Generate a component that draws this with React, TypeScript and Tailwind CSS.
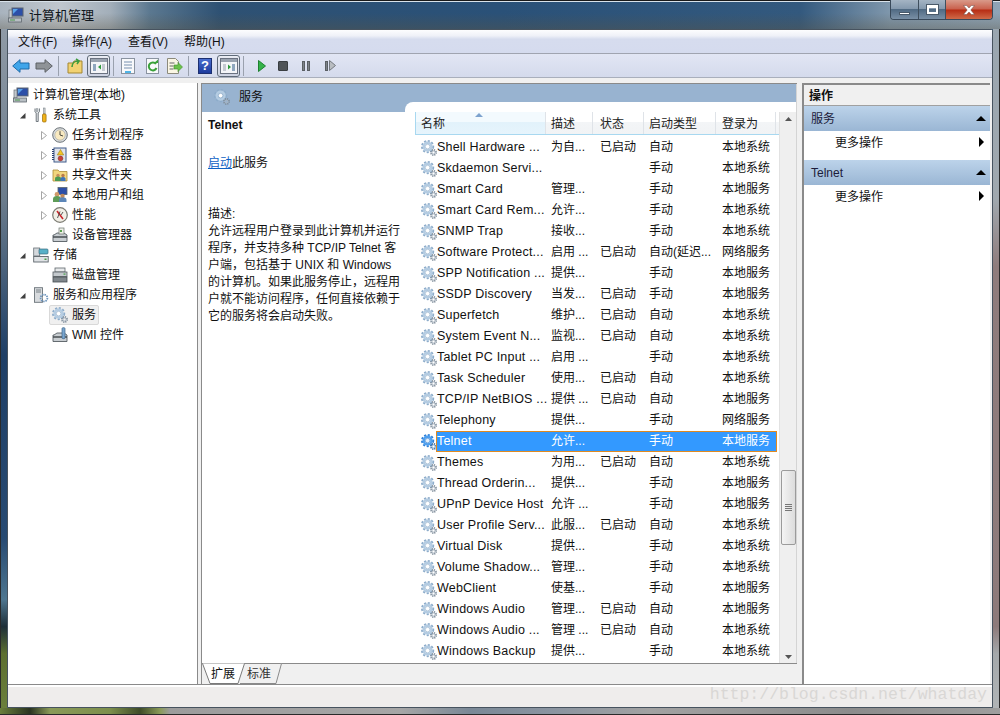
import React from 'react'

const font = { fontFamily: '"Liberation Sans", "Noto Sans CJK SC", sans-serif' }

const Gear = ({ size = 16, dark = false }: { size?: number; dark?: boolean }) => (
    <svg width={size} height={size} viewBox="0 0 16 16" className="shrink-0">
        <circle cx="6.6" cy="6.6" r="5.6" fill="none" stroke={dark ? '#2f80d8' : '#8dacca'} strokeWidth="2" strokeDasharray="2.1 1.6" />
        <circle cx="6.6" cy="6.6" r="3.9" fill="none" stroke={dark ? '#4f9fee' : '#b4cce2'} strokeWidth="2.4" />
        <circle cx="6.6" cy="6.6" r="2.3" fill={dark ? '#e4f0fc' : '#fff'} stroke={dark ? '#2a74c6' : '#86a6c4'} strokeWidth="0.6" />
        <circle cx="12.5" cy="12.5" r="2.6" fill="none" stroke={dark ? '#3f6c9c' : '#7f8d9b'} strokeWidth="1.7" strokeDasharray="1.2 0.85" />
        <circle cx="12.5" cy="12.5" r="1.5" fill="none" stroke={dark ? '#86aed6' : '#a8b4c0'} strokeWidth="1" />
    </svg>
)

const Computer = () => (
    <svg width="16" height="16" viewBox="0 0 16 16" className="shrink-0">
        <rect x="4" y="1" width="11" height="8" fill="#2c4fa8" stroke="#5a6470" strokeWidth="1" />
        <path d="M5 2h5L5 7z" fill="#59a3ea" />
        <rect x="1" y="3" width="3" height="8" fill="#c3c8cc" stroke="#6a7278" strokeWidth="0.7" />
        <rect x="0.5" y="11" width="13" height="4" fill="#b8bfc4" stroke="#5f686e" strokeWidth="0.8" />
        <rect x="2" y="12.5" width="5" height="1" fill="#4c9a4c" />
    </svg>
)

const Tools = () => (
    <svg width="16" height="16" viewBox="0 0 16 16" className="shrink-0">
        <path d="M4 1v4M2 1.5v3.2l1.2 1.3v8.5h2V6l1.2-1.3V1.5" fill="#e8ebee" stroke="#616a70" strokeWidth="0.9" />
        <rect x="10.5" y="1" width="1.6" height="6" fill="#c9ced2" stroke="#70787e" strokeWidth="0.5" />
        <rect x="9.5" y="7" width="3.6" height="8" rx="1" fill="#f0b31a" stroke="#9a6c08" strokeWidth="0.7" />
    </svg>
)

const Clock = () => (
    <svg width="16" height="16" viewBox="0 0 16 16" className="shrink-0">
        <circle cx="8" cy="8" r="7.3" fill="#d9dcdf" stroke="#6d7478" strokeWidth="1" />
        <circle cx="8" cy="8" r="5.2" fill="#f8e9c0" stroke="#a6a8a0" strokeWidth="0.6" />
        <path d="M8 4.2V8l3 1" fill="none" stroke="#4a4a40" strokeWidth="1" />
    </svg>
)

const EventLog = () => (
    <svg width="16" height="16" viewBox="0 0 16 16" className="shrink-0">
        <rect x="2" y="1" width="12" height="14" fill="#dfe3ea" stroke="#3f5a8a" strokeWidth="1" />
        <path d="M1 2v12" stroke="#2b3f70" strokeWidth="2" strokeDasharray="1 1" />
        <path d="M8.5 2.5l3.2 5.5H5.3z" fill="#f3c625" stroke="#8a6c10" strokeWidth="0.5" />
        <circle cx="8.5" cy="11.5" r="2.4" fill="#c8403a" stroke="#7a1e1a" strokeWidth="0.5" />
    </svg>
)

const SharedFolder = () => (
    <svg width="16" height="16" viewBox="0 0 16 16" className="shrink-0">
        <path d="M1 3h5l1.4 1.5H15V14H1z" fill="#f2d67e" stroke="#a98a35" strokeWidth="0.8" />
        <circle cx="6" cy="8.5" r="1.7" fill="#c98d5c" />
        <path d="M3 14v-2.5a3 2 0 0 1 6 0V14z" fill="#4d9a52" />
        <circle cx="11" cy="8.5" r="1.7" fill="#b77a4c" />
        <path d="M8.5 14v-2.5a2.6 2 0 0 1 5 0V14z" fill="#3f74b8" />
    </svg>
)

const Users = () => (
    <svg width="16" height="16" viewBox="0 0 16 16" className="shrink-0">
        <rect x="6" y="0.5" width="9" height="7" fill="#2c4fa8" stroke="#59646e" strokeWidth="0.8" />
        <circle cx="5" cy="7.5" r="2.4" fill="#d09a6a" />
        <path d="M1 15v-3a4 3 0 0 1 8 0v3z" fill="#5e9c58" />
        <circle cx="10.5" cy="9" r="2.2" fill="#c08a5a" />
        <path d="M7 15v-2a3.5 2.6 0 0 1 7.5 0v2z" fill="#5c86b8" />
    </svg>
)

const Perf = () => (
    <svg width="16" height="16" viewBox="0 0 16 16" className="shrink-0">
        <circle cx="8" cy="8" r="7.3" fill="#f1efe6" stroke="#7a7a72" strokeWidth="1.2" />
        <path d="M5 4l6 8" stroke="#c8242a" strokeWidth="1.6" />
        <path d="M8 4.5L5.5 11M11 5l-2 3" stroke="#333" strokeWidth="0.8" fill="none" />
    </svg>
)

const DeviceBox = () => (
    <svg width="16" height="16" viewBox="0 0 16 16" className="shrink-0">
        <path d="M2 8l3-2h7l3 2v6.5H1V8z" fill="#c9ced2" stroke="#555c62" strokeWidth="0.9" />
        <path d="M1 10h14" stroke="#3e454a" strokeWidth="1.4" />
        <rect x="7" y="1" width="5" height="6" fill="#eef1e8" stroke="#6c7470" strokeWidth="0.7" />
        <rect x="8" y="3" width="2" height="2" fill="#58a04e" />
    </svg>
)

const Storage = () => (
    <svg width="16" height="16" viewBox="0 0 16 16" className="shrink-0">
        <rect x="0.7" y="1" width="6" height="8" fill="#d4d8dc" stroke="#687076" strokeWidth="0.8" />
        <rect x="6" y="2" width="9" height="5" rx="1" fill="#58b0c8" stroke="#3a6d80" strokeWidth="0.7" />
        <rect x="0.7" y="9.5" width="14.5" height="5.5" fill="#dfe2e5" stroke="#5c646a" strokeWidth="0.9" />
        <rect x="11.5" y="11.5" width="2" height="1.5" fill="#49a048" />
    </svg>
)

const Disk = () => (
    <svg width="16" height="16" viewBox="0 0 16 16" className="shrink-0">
        <rect x="3" y="1" width="10" height="4" fill="#e7e9eb" stroke="#5f666c" strokeWidth="0.8" />
        <rect x="1" y="5" width="14" height="4.5" fill="#c4c9cd" stroke="#555c62" strokeWidth="0.8" />
        <rect x="1" y="10" width="14" height="5" fill="#80878c" stroke="#454b50" strokeWidth="0.8" />
        <rect x="11.5" y="6.5" width="2" height="1.2" fill="#4aa24a" />
    </svg>
)

const ServerApps = () => (
    <svg width="16" height="16" viewBox="0 0 16 16" className="shrink-0">
        <rect x="1.5" y="0.7" width="8" height="14.6" fill="#d8dbde" stroke="#6a7278" strokeWidth="0.9" />
        <path d="M3 3h5M3 5h5" stroke="#6e767c" strokeWidth="0.9" />
        <circle cx="11" cy="11" r="3.4" fill="none" stroke="#6e95bd" strokeWidth="1.8" strokeDasharray="1.4 0.9" />
        <circle cx="11" cy="11" r="1.4" fill="#fff" />
    </svg>
)

const Wmi = () => (
    <svg width="16" height="16" viewBox="0 0 16 16" className="shrink-0">
        <path d="M2 8l3-2h7l3 2v6.5H1V8z" fill="#c9ced2" stroke="#555c62" strokeWidth="0.9" />
        <path d="M1 10h14" stroke="#3e454a" strokeWidth="1.4" />
        <rect x="10" y="0.7" width="3" height="11" rx="1" fill="#7aa6cf" stroke="#3e648a" strokeWidth="0.7" />
    </svg>
)

// tree arrows
const Open = () => (
    <svg width="7" height="7" viewBox="0 0 7 7" className="shrink-0">
        <path d="M6.5 1v5.5H1z" fill="#3f3f3f" />
    </svg>
)
const Closed = () => (
    <svg width="6" height="9" viewBox="0 0 6 9" className="shrink-0">
        <path d="M0.5 0.5l5 4-5 4z" fill="#fff" stroke="#a6a6a6" />
    </svg>
)

const TreeRow = ({ level, arrow, icon, text }: { level: number; arrow?: 'open' | 'closed'; icon: React.ReactNode; text: string }) => (
    <div className={`flex items-center h-5 ${level === 0 ? 'pl-[5px]' : level === 1 ? 'pl-[11px]' : 'pl-[33px]'}`}>
        {level > 0 && <span className="w-[13px] flex items-center justify-start shrink-0">{arrow === 'open' ? <Open /> : arrow === 'closed' ? <Closed /> : null}</span>}
        <span className={level === 0 ? '' : level === 1 ? 'ml-[1px]' : 'ml-[-2px]'}>{icon}</span>
        <span className="ml-[4px]">{text}</span>
    </div>
)

const rows: [string, string, string, string, string][] = [
    ['Shell Hardware ...', '为自...', '已启动', '自动', '本地系统'],
    ['Skdaemon Servi...', '', '', '手动', '本地系统'],
    ['Smart Card', '管理...', '', '手动', '本地服务'],
    ['Smart Card Rem...', '允许...', '', '手动', '本地系统'],
    ['SNMP Trap', '接收...', '', '手动', '本地系统'],
    ['Software Protect...', '启用 ...', '已启动', '自动(延迟...', '网络服务'],
    ['SPP Notification ...', '提供...', '', '手动', '本地服务'],
    ['SSDP Discovery', '当发...', '已启动', '手动', '本地服务'],
    ['Superfetch', '维护...', '已启动', '自动', '本地系统'],
    ['System Event N...', '监视...', '已启动', '自动', '本地系统'],
    ['Tablet PC Input ...', '启用 ...', '', '手动', '本地系统'],
    ['Task Scheduler', '使用...', '已启动', '自动', '本地系统'],
    ['TCP/IP NetBIOS ...', '提供 ...', '已启动', '自动', '本地服务'],
    ['Telephony', '提供...', '', '手动', '网络服务'],
    ['Telnet', '允许...', '', '手动', '本地服务'],
    ['Themes', '为用...', '已启动', '自动', '本地系统'],
    ['Thread Orderin...', '提供...', '', '手动', '本地服务'],
    ['UPnP Device Host', '允许 ...', '', '手动', '本地服务'],
    ['User Profile Serv...', '此服...', '已启动', '自动', '本地系统'],
    ['Virtual Disk', '提供...', '', '手动', '本地系统'],
    ['Volume Shadow...', '管理...', '', '手动', '本地系统'],
    ['WebClient', '使基...', '', '手动', '本地服务'],
    ['Windows Audio', '管理...', '已启动', '自动', '本地服务'],
    ['Windows Audio ...', '管理 ...', '已启动', '自动', '本地系统'],
    ['Windows Backup', '提供...', '', '手动', '本地系统'],
]

const HeaderCell = ({ w, text }: { w: string; text: string }) => (
    <div className={`${w} h-full flex items-center pt-[2px] border-r border-[#dfe3e8] bg-[linear-gradient(#fff_0%,#fff_45%,#f3f5f7_45%,#f1f3f5_100%)]`}>
        {text}
    </div>
)

const TbBtn = ({ children, w, active }: { children: React.ReactNode; w: string; active?: boolean }) => (
    <div className={`${w} h-[22px] flex items-center justify-center shrink-0 ${active ? 'rounded-[3px] border border-[#5f6a78] bg-[linear-gradient(#e9ebf3,#c9cfdf)] shadow-[inset_0_0_1px_#fff]' : ''}`}>
        {children}
    </div>
)

const Sep = () => <div className="w-px h-[20px] bg-[#9aa1ae] shrink-0" />

const PanelIcon = ({ right }: { right?: boolean }) => (
    <svg width="18" height="16" viewBox="0 0 18 16">
        <rect x="0.5" y="0.5" width="17" height="15" fill="#f4f5f8" stroke="#6b7280" />
        <rect x="1" y="1" width="16" height="3" fill="#9aa3b0" />
        <rect x="3" y="6" width="3" height="7" fill={right ? '#c5cad2' : '#90a7bf'} />
        <rect x="12" y="6" width="3" height="7" fill={right ? '#90a7bf' : '#c5cad2'} />
        <path d={right ? 'M8 6.5l3 2.5-3 2.5z' : 'M11 6.5L8 9l3 2.5z'} fill="#2e9a3c" />
    </svg>
)

const ActionSection = ({ title }: { title: string }) => (
    <>
        <div className="h-[25px] flex items-center pl-[7px] pr-[3px] text-[#1c1c3a] bg-[linear-gradient(#bcd3ea,#9ab6d4)]">
            <span className="flex-1">{title}</span>
            <svg width="10" height="5" viewBox="0 0 10 5" className="mr-[1px]"><path d="M0 5l5-5 5 5z" fill="#000" /></svg>
        </div>
        <div className="h-[29px] flex items-start pt-[6px] pl-[31px] pr-[6px]">
            <span className="flex-1">更多操作</span>
            <svg width="5" height="10" viewBox="0 0 5 10"><path d="M0 0l5 5-5 5z" fill="#000" /></svg>
        </div>
    </>
)

export default function App() {
    return (
        <div style={font} className="w-[1000px] h-[715px] relative overflow-hidden flex flex-col text-[12px] leading-none text-[#111] bg-[#3d5c7a]">
            {/* title bar */}
            <div className="h-[29px] flex items-start shrink-0 shadow-[inset_0_1px_0_#1a1a1a,inset_0_2px_0_#d8e2ea] bg-[linear-gradient(rgba(0,0,0,0)_45%,rgba(92,84,64,0.35)_100%),linear-gradient(90deg,#a8b3be_0%,#c0c7ce_6%,#a3afba_11%,#5b7890_15%,#2e5173_22%,#2a5178_50%,#33597e_80%,#7f97ac_89%,#8fa4b6_100%)]">
                <div className="flex items-center pl-[8px] pt-[7px] gap-[5px] text-[13px] text-[#10161c]">
                    <Computer />
                    <span>计算机管理</span>
                </div>
                <div className="ml-auto mr-[7px] flex h-[20px] rounded-b-[4px] border border-t-0 border-[#39495a] overflow-hidden">
                    <div className="w-[28px] flex items-center justify-center border-r border-[#3f4f5e] bg-[linear-gradient(#a4b4c4_0%,#8398ad_48%,#506a83_50%,#7a90a6_100%)]">
                        <div className="w-[11px] h-[3px] mt-[7px] bg-white border border-[#4a5a6a]" />
                    </div>
                    <div className="w-[27px] flex items-center justify-center border-r border-[#3f4f5e] bg-[linear-gradient(#a4b4c4_0%,#8398ad_48%,#506a83_50%,#7a90a6_100%)]">
                        <div className="w-[11px] h-[9px] border-2 border-t-[3px] border-white outline outline-[#4a5a6a]" />
                    </div>
                    <div className="w-[46px] flex items-center justify-center bg-[linear-gradient(#d99a8a_0%,#c9604c_48%,#b72c14_52%,#cf6a48_100%)]">
                        <svg width="12" height="10" viewBox="0 0 12 10"><path d="M0.5 0.5h3.2L6 3l2.3-2.5h3.2L7.8 5l3.7 4.5H8.3L6 7 3.7 9.5H0.5L4.2 5z" fill="#fff" stroke="#6a4a44" strokeWidth="0.5" /></svg>
                    </div>
                </div>
            </div>

            <div className="flex-1 min-h-0 flex">
                {/* left glass edge */}
                <div className="w-[7px] shrink-0 border-l border-[#2a2a2a] bg-[linear-gradient(#8f9aa6_0%,#6b7c8c_25%,#1f3f66_48%,#274a72_75%,#4e7690_84%,#1e2f38_88%,#5c6f30_92%,#6b7f3c_100%)]" />

                {/* window body */}
                <div className="flex-1 min-w-0 flex flex-col bg-[#f0f0f0] border border-[#47535f] rounded-t-[2px]">
                    {/* menu */}
                    <div className="h-[24px] shrink-0 flex items-center pl-[10px] text-[12px] border-b border-[#a0a4b0] bg-[linear-gradient(#fdfdfe_0%,#eff1f8_25%,#d6dcee_40%,#d5dbee_100%)]">
                        <span className="w-[54px]">文件(F)</span>
                        <span className="w-[56px]">操作(A)</span>
                        <span className="w-[56px]">查看(V)</span>
                        <span>帮助(H)</span>
                    </div>
                    {/* toolbar */}
                    <div className="h-[24px] shrink-0 flex items-center pl-[3px] border-b border-[#a9afbc] bg-[linear-gradient(#e2e6f4,#d4daec)]">
                        <TbBtn w="w-[19px]">
                            <svg width="18" height="14" viewBox="0 0 18 14"><path d="M0.7 7L8 0.7V4h9v6H8v3.3z" fill="#3fa5ea" stroke="#1d6aa8" /></svg>
                        </TbBtn>
                        <TbBtn w="w-[22px] ml-[3px]">
                            <svg width="18" height="14" viewBox="0 0 18 14"><path d="M17.3 7L10 0.7V4H1v6h9v3.3z" fill="#8f9397" stroke="#5d6165" /></svg>
                        </TbBtn>
                        <div className="w-[3px]" />
                        <Sep />
                        <TbBtn w="w-[16px] ml-[8px]">
                            <svg width="16" height="16" viewBox="0 0 16 16"><path d="M1 5h5l1-2h8v12H1z" fill="#f2d272" stroke="#a38733" /><path d="M5 9c0-4 3-6 6-6M9 1l3 2-2 3" fill="none" stroke="#3f9c3f" strokeWidth="1.6" /></svg>
                        </TbBtn>
                        <TbBtn w="w-[23px] ml-[4px]" active><PanelIcon /></TbBtn>
                        <div className="w-[3px]" />
                        <Sep />
                        <TbBtn w="w-[16px] ml-[6px]">
                            <svg width="16" height="16" viewBox="0 0 16 16"><rect x="1.5" y="0.5" width="13" height="15" fill="#f8f9fb" stroke="#8a93a0" /><path d="M4 4h8M4 7h8M4 10h8" stroke="#7690b0" /><rect x="5" y="13" width="6" height="2" fill="#50b4e6" /></svg>
                        </TbBtn>
                        <TbBtn w="w-[16px] ml-[9px]">
                            <svg width="16" height="16" viewBox="0 0 16 16"><rect x="1.5" y="0.5" width="12" height="15" fill="#f8f9fb" stroke="#8a93a0" /><path d="M11 6a4 4 0 1 0 .5 4" fill="none" stroke="#3aa13a" strokeWidth="2" /><path d="M9 5h4V1.5z" fill="#3aa13a" /></svg>
                        </TbBtn>
                        <TbBtn w="w-[17px] ml-[5px]">
                            <svg width="17" height="16" viewBox="0 0 17 16"><path d="M1.5 0.5h8l3 3v12h-11z" fill="#faf6e4" stroke="#8c8a7c" /><path d="M3.5 5h5M3.5 8h4M3.5 11h4" stroke="#666" /><path d="M8 7h4V4.5L16.5 9 12 13.5V11H8z" fill="#6cc24a" stroke="#3f8a2a" strokeWidth="0.6" /></svg>
                        </TbBtn>
                        <div className="w-[5px]" />
                        <Sep />
                        <TbBtn w="w-[14px] ml-[9px]">
                            <div className="w-[14px] h-[16px] flex items-center justify-center bg-[linear-gradient(#4a6ed0,#1c3a9c)] text-white font-bold text-[13px] border border-[#1c2f70]">?</div>
                        </TbBtn>
                        <TbBtn w="w-[23px] ml-[5px]" active><PanelIcon right /></TbBtn>
                        <div className="w-[3px]" />
                        <Sep />
                        <TbBtn w="w-[10px] ml-[13px]">
                            <svg width="8" height="12" viewBox="0 0 8 12"><path d="M0.5 0.5L7.5 6l-7 5.5z" fill="#35b34a" stroke="#1e8230" /></svg>
                        </TbBtn>
                        <TbBtn w="w-[10px] ml-[11px]">
                            <div className="w-[10px] h-[10px] rounded-[1px] bg-[#4f5458] border border-[#3a3e42]" />
                        </TbBtn>
                        <TbBtn w="w-[9px] ml-[13px]">
                            <div className="flex gap-[2px]">
                                <div className="w-[3px] h-[10px] bg-[#7d8388] border border-[#5a5f64]" />
                                <div className="w-[3px] h-[10px] bg-[#7d8388] border border-[#5a5f64]" />
                            </div>
                        </TbBtn>
                        <TbBtn w="w-[12px] ml-[14px]">
                            <div className="flex items-center gap-[1px]">
                                <div className="w-[3px] h-[10px] bg-[#7d8388] border border-[#5a5f64]" />
                                <svg width="7" height="11" viewBox="0 0 7 11"><path d="M0.5 0.5l6 5-6 5z" fill="#b9bdc1" stroke="#74797e" /></svg>
                            </div>
                        </TbBtn>
                    </div>

                    {/* main */}
                    <div className="flex-1 min-h-0 flex pt-[5px] border-b border-[#8a8a8a]">
                        {/* tree */}
                        <div className="w-[190px] shrink-0 bg-white border-r border-[#8a8a8a] pt-[2px] text-[12px]">
                            <TreeRow level={0} icon={<Computer />} text="计算机管理(本地)" />
                            <TreeRow level={1} arrow="open" icon={<Tools />} text="系统工具" />
                            <TreeRow level={2} arrow="closed" icon={<Clock />} text="任务计划程序" />
                            <TreeRow level={2} arrow="closed" icon={<EventLog />} text="事件查看器" />
                            <TreeRow level={2} arrow="closed" icon={<SharedFolder />} text="共享文件夹" />
                            <TreeRow level={2} arrow="closed" icon={<Users />} text="本地用户和组" />
                            <TreeRow level={2} arrow="closed" icon={<Perf />} text="性能" />
                            <TreeRow level={2} icon={<DeviceBox />} text="设备管理器" />
                            <TreeRow level={1} arrow="open" icon={<Storage />} text="存储" />
                            <TreeRow level={2} icon={<Disk />} text="磁盘管理" />
                            <TreeRow level={1} arrow="open" icon={<ServerApps />} text="服务和应用程序" />
                            <div className="flex items-center h-5 pl-[41px]">
                                <div className="flex items-center h-[20px] pl-[2px] pr-[2px] gap-[4px] rounded-[2px] border border-[#d9d9d9] bg-[#f0f0f0]">
                                    <Gear />
                                    <span>服务</span>
                                </div>
                            </div>
                            <TreeRow level={2} icon={<Wmi />} text="WMI 控件" />
                        </div>

                        {/* center */}
                        <div className="w-[596px] ml-[3px] shrink-0 flex flex-col border-t border-l border-[#8a8a8a]">
                            <div className="flex-1 min-h-0 bg-white flex flex-col border-r border-[#d4d4d4]">
                                <div className="h-[28px] shrink-0 bg-[#98b3d0] flex items-center pl-[12px] pb-[2px] gap-[9px] text-[13px]">
                                    <Gear />
                                    <span className="text-[12px]">服务</span>
                                </div>
                                <div className="flex-1 min-h-0 flex">
                                    <div className="w-[203px] shrink-0 pl-[6px] pt-[7px]">
                                        <div className="font-bold text-[12px] h-[14px]">Telnet</div>
                                        <div className="mt-[24px]"><span className="text-[#0f62c4] underline">启动</span>此服务</div>
                                        <div className="mt-[37px] leading-[17px]">描述:</div>
                                        <div className="leading-[17px] w-[196px]">
                                            <div>允许远程用户登录到此计算机并运行</div>
                                            <div>程序，并支持多种 TCP/IP Telnet 客</div>
                                            <div>户端，包括基于 UNIX 和 Windows</div>
                                            <div>的计算机。如果此服务停止，远程用</div>
                                            <div>户就不能访问程序，任何直接依赖于</div>
                                            <div>它的服务将会启动失败。</div>
                                        </div>
                                    </div>
                                    <div className="flex-1 min-w-0 flex flex-col relative">
                                        {/* white tab that rises into the blue band */}
                                        <div className="absolute left-0 top-[-10px] w-full h-[10px] bg-white rounded-tl-[8px]" />
                                        <div className="flex-1 min-h-0 flex pl-[10px]">
                                            <div className="flex-1 min-w-0 flex flex-col">
                                                <div className="h-[23px] shrink-0 flex border-l border-b border-[#a8d8f0] text-[#222]">
                                                    <div className="w-[130px] h-full relative flex items-center pl-[5px] pt-[2px] border-r border-[#dfe3e8] bg-[linear-gradient(#f3fafe_0%,#f3fafe_45%,#e2f2fb_45%,#e6f4fc_100%)]">
                                                        <svg width="8" height="4" viewBox="0 0 8 4" className="absolute left-[59px] top-[1px]">
                                                            <path d="M0 4l4-4 4 4z" fill="#7da2ce" />
                                                        </svg>
                                                        名称
                                                    </div>
                                                    <HeaderCell w="w-[47px] pl-[5px]" text="描述" />
                                                    <HeaderCell w="w-[51px] pl-[7px]" text="状态" />
                                                    <HeaderCell w="w-[72px] pl-[5px]" text="启动类型" />
                                                    <HeaderCell w="w-[60px] pl-[6px]" text="登录为" />
                                                    <div className="flex-1 bg-[linear-gradient(#fff_0%,#fff_45%,#f3f5f7_45%,#f1f3f5_100%)]" />
                                                </div>
                                                <div className="flex-1 min-h-0 overflow-hidden pt-[2px]">
                                                    {rows.map((r) => {
                                                        const on = r[0] === 'Telnet'
                                                        return (
                                                            <div key={r[0] + r[4] + r[1]} className="h-[21px] flex items-center">
                                                                <span className="w-[21px] pl-[6px] shrink-0"><Gear dark={on} /></span>
                                                                <div className={`flex h-full w-[341px] shrink-0 items-center ${on ? 'bg-[#3399ff] text-white shadow-[inset_0_0_0_1px_#e08a20]' : ''}`}>
                                                                    <span className="w-[111px] shrink-0 pl-px text-[12.5px] tracking-[0.2px] whitespace-nowrap">{r[0]}</span>
                                                                    <span className="w-[49px] shrink-0 pl-[4px] mb-[2px]">{r[1]}</span>
                                                                    <span className="w-[49px] shrink-0 pl-[4px] mb-[2px]">{r[2]}</span>
                                                                    <span className="w-[72px] shrink-0 pl-[4px] mb-[2px]">{r[3]}</span>
                                                                    <span className="w-[60px] shrink-0 pl-[5px] mb-[2px]">{r[4]}</span>
                                                                </div>
                                                            </div>
                                                        )
                                                    })}
                                                </div>
                                            </div>
                                            {/* scrollbar */}
                                            <div className="w-[17px] shrink-0 flex flex-col items-center bg-[#efefef] border-l border-[#e2e2e2]">
                                                <div className="h-[14px] shrink-0 flex items-center"><svg width="7" height="4" viewBox="0 0 7 4"><path d="M0 4l3.5-4 3.5 4z" fill="#555" /></svg></div>
                                                <div className="flex-1 w-full flex flex-col justify-end">
                                                    <div className="h-[75px] mb-[105px] w-[15px] mx-auto flex flex-col items-center justify-center gap-px rounded-[2px] border border-[#9b9b9b] bg-[linear-gradient(90deg,#f4f4f4,#dcdcdc)]">
                                                        <div className="w-[7px] h-px bg-[#777]" />
                                                        <div className="w-[7px] h-px bg-[#777]" />
                                                        <div className="w-[7px] h-px bg-[#777]" />
                                                        <div className="w-[7px] h-px bg-[#777]" />
                                                    </div>
                                                </div>
                                                <div className="h-[13px] shrink-0 flex items-center"><svg width="7" height="4" viewBox="0 0 7 4"><path d="M0 0l3.5 4 3.5-4z" fill="#555" /></svg></div>
                                            </div>
                                        </div>
                                    </div>
                                </div>
                            </div>
                            {/* tabs */}
                            <div className="h-[21px] shrink-0 relative flex bg-[#f0f0f0] border-t border-[#8a8a8a]">
                                <svg width="82" height="21" viewBox="0 0 82 21" className="absolute left-0 top-[-1px]">
                                    <path d="M38 20.5h36l5.5-20" fill="#f0f0f0" stroke="#8a8a8a" />
                                    <path d="M0.5 0.5l7.5 20h28l6.5-20z" fill="#fff" />
                                    <path d="M0.5 0.5l7.5 20h28l6.5-20" fill="none" stroke="#7a7a7a" />
                                </svg>
                                <span className="relative ml-[9px] mt-[4px]">扩展</span>
                                <span className="relative ml-[12px] mt-[4px] text-[#333]">标准</span>
                            </div>
                        </div>

                        {/* actions */}
                        <div className="flex-1 min-w-0 ml-[5px] mr-[2px] bg-white border-t-2 border-l-2 border-[#8a8a8a]">
                            <div className="h-[21px] flex items-center pl-[5px] pt-[1px] font-bold bg-[#f0f0f0] border-b border-[#a0a0a0]">操作</div>
                            <ActionSection title="服务" />
                            <ActionSection title="Telnet" />
                        </div>
                    </div>

                    {/* status bar */}
                    <div className="h-[22px] shrink-0 bg-[#efedec] border-t-2 border-white" />
                </div>

                {/* right glass edge */}
                <div className="w-[7px] shrink-0 border-r border-[#2a2a2a] bg-[linear-gradient(#9aa6b0_0%,#a0a8ae_25%,#8f7c7c_35%,#8d7a7a_88%,#a4a8aa_92%,#b0b4b6_100%)]" />
            </div>

            {/* bottom glass edge */}
            <div className="h-[7px] shrink-0 border-b border-[#2a2a2a] bg-[linear-gradient(90deg,#6b7f3c_0%,#2a3320_3%,#8a9a58_5%,#7d8f4c_11%,#3f4c28_14%,#8a9a58_16%,#9c9c9c_17%,#a6a6a6_40%,#7a8896_47%,#8a94a0_55%,#a2a2a2_65%,#8c8c8c_85%,#9e9e9e_100%)]" />

            {/* csdn watermark over the picture */}
            <div className="absolute right-[13px] top-[684px] font-['Liberation_Mono'] text-[16.5px] leading-[22px] text-[#d9d7d5]">http://blog.csdn.net/whatday</div>
        </div>
    )
}
